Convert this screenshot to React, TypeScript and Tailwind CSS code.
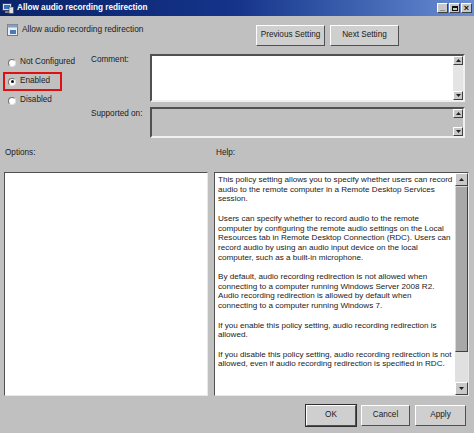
import React from 'react';

const font = "font-['Liberation_Sans','Segoe_UI',sans-serif]";

const RaisedButton: React.FC<{ label: string; w: string; isDefault?: boolean }> = ({ label, w, isDefault }) => (
    <div className={`${w} h-[21px] ${isDefault ? 'outline outline-1 outline-[#303030]' : ''} border border-t-white border-l-white border-b-[#505050] border-r-[#505050] bg-[#cfcfcf] flex items-center justify-center text-[8.2px] text-[#202020]`}>
        {label}
    </div>
);

const ScrollArrow: React.FC<{ up?: boolean; w: string; h: string }> = ({ up, w, h }) => (
    <div className={`${w} ${h} bg-[#c8c8c8] border border-t-white border-l-white border-b-[#404040] border-r-[#404040] flex items-center justify-center`}>
        <svg width="5" height="3" viewBox="0 0 5 3">
            {up ? <path d="M2.5 0 L5 3 L0 3 Z" fill="#202020" /> : <path d="M0 0 L5 0 L2.5 3 Z" fill="#202020" />}
        </svg>
    </div>
);

const Radio: React.FC<{ checked?: boolean }> = ({ checked }) => (
    <div className="w-[8px] h-[8px] rounded-full bg-white border border-t-[#707070] border-l-[#707070] border-b-[#e0e0e0] border-r-[#e0e0e0] flex items-center justify-center">
        {checked && <div className="w-[3px] h-[3px] rounded-full bg-[#101010]" />}
    </div>
);

const App: React.FC = () => {
    return (
        <div className={`w-[474px] h-[433px] bg-[#c0c0c0] overflow-hidden flex flex-col ${font} text-[#202020]`}>
            {/* Title bar */}
            <div className="h-[16px] flex items-center bg-gradient-to-r from-[#0a246a] via-[#15348a] to-[#6a8ed4] pl-[2px] pr-[2px]">
                <svg width="12" height="11" viewBox="0 0 12 11" className="mr-[3px]">
                    <rect x="0.5" y="0.5" width="9" height="7" fill="#cfe0f0" stroke="#304060" />
                    <rect x="2" y="2" width="6" height="4" fill="#3a6cc8" />
                    <rect x="3" y="8" width="4" height="2" fill="#808080" />
                    <rect x="7" y="4" width="4.5" height="6.5" fill="#e0e0e0" stroke="#404040" strokeWidth="0.6" />
                </svg>
                <span className="text-white font-bold text-[8.2px] leading-none">Allow audio recording redirection</span>
                <div className="ml-auto flex gap-[1px]">
                    <div className="w-[11px] h-[10px] bg-[#c8c8c8] border border-t-white border-l-white border-b-[#404040] border-r-[#404040] flex items-end justify-center pb-[1px]">
                        <div className="w-[5px] h-[1px] bg-[#909090]" />
                    </div>
                    <div className="w-[11px] h-[10px] bg-[#c8c8c8] border border-t-white border-l-white border-b-[#404040] border-r-[#404040] flex items-center justify-center">
                        <div className="w-[6px] h-[5px] border border-t-2 border-[#101010]" />
                    </div>
                    <div className="w-[11px] h-[10px] bg-[#c8c8c8] border border-t-white border-l-white border-b-[#404040] border-r-[#404040] flex items-center justify-center text-[9px] font-bold leading-none text-[#101010]">
                        ×
                    </div>
                </div>
            </div>

            {/* Header row */}
            <div className="h-[34px] flex px-[4px]">
                <div className="w-[252px] flex items-start pt-[8px] pl-[3px] gap-[4px]">
                    <svg width="11" height="12" viewBox="0 0 11 12">
                        <rect x="0.5" y="0.5" width="10" height="11" fill="#e8eef4" stroke="#6a7a8a" />
                        <rect x="0.5" y="0.5" width="10" height="3" fill="#8aa0b8" />
                        <rect x="3" y="6" width="6" height="4" fill="#4a78b8" />
                    </svg>
                    <span className="text-[8.4px] leading-[11px]">Allow audio recording redirection</span>
                </div>
                <div className="flex gap-[5px] pt-[9px]">
                    <RaisedButton label="Previous Setting" w="w-[69px]" />
                    <RaisedButton label="Next Setting" w="w-[69px]" />
                </div>
            </div>

            {/* Settings row */}
            <div className="h-[95px] flex pl-[3px]">
                <div className="w-[88px] flex flex-col pt-[3px] text-[8.2px]">
                    <div className="h-[19px] flex items-center gap-[4px] pl-[5px]">
                        <Radio />
                        <span>Not Configured</span>
                    </div>
                    <div className="h-[19px] w-[59px] flex items-center gap-[4px] pl-[3px] border-2 border-[#e01010]">
                        <Radio checked />
                        <span>Enabled</span>
                    </div>
                    <div className="h-[19px] flex items-center gap-[4px] pl-[5px]">
                        <Radio />
                        <span>Disabled</span>
                    </div>
                </div>
                <div className="flex flex-col pt-[4px] gap-[5px]">
                    <div className="flex">
                        <div className="w-[59px] text-[8.2px]">Comment:</div>
                        <div className="w-[315px] h-[48px] bg-white border-2 border-t-[#505050] border-l-[#505050] border-b-[#f0f0f0] border-r-[#f0f0f0] flex justify-end">
                            <div className="w-[10px] flex flex-col justify-between bg-[#e4e4e4]">
                                <ScrollArrow up w="w-[10px]" h="h-[9px]" />
                                <ScrollArrow w="w-[10px]" h="h-[9px]" />
                            </div>
                        </div>
                    </div>
                    <div className="flex">
                        <div className="w-[59px] text-[8.2px] pt-[1px]">Supported on:</div>
                        <div className="w-[315px] h-[31px] bg-[#c0c0c0] border-2 border-t-[#505050] border-l-[#505050] border-b-[#f0f0f0] border-r-[#f0f0f0] flex justify-end">
                            <div className="w-[10px] flex flex-col justify-between">
                                <ScrollArrow up w="w-[10px]" h="h-[9px]" />
                                <ScrollArrow w="w-[10px]" h="h-[9px]" />
                            </div>
                        </div>
                    </div>
                </div>
            </div>

            {/* Options / Help labels */}
            <div className="h-[27px] flex items-start pt-[2px] text-[8.2px] pl-[5px]">
                <div className="w-[211px]">Options:</div>
                <div>Help:</div>
            </div>

            {/* Options / Help panes */}
            <div className="h-[224px] flex px-[4px] gap-[6px]">
                <div className="w-[204px] bg-white border border-t-[#505050] border-l-[#505050] border-b-[#e8e8e8] border-r-[#e8e8e8]" />
                <div className="w-[255px] bg-white border border-t-[#505050] border-l-[#505050] border-b-[#e8e8e8] border-r-[#e8e8e8] flex">
                    <div className="flex-1 pl-[3px] pt-[2px] text-[8.1px] leading-[9.7px] text-[#1a1a1a] flex flex-col gap-[9.7px]">
                        <p>This policy setting allows you to specify whether users can record audio to the remote computer in a Remote Desktop Services session.</p>
                        <p>Users can specify whether to record audio to the remote computer by configuring the remote audio settings on the Local Resources tab in Remote Desktop Connection (RDC). Users can record audio by using an audio input device on the local computer, such as a built-in microphone.</p>
                        <p className="pr-[8px]">By default, audio recording redirection is not allowed when connecting to a computer running Windows Server 2008 R2. Audio recording redirection is allowed by default when connecting to a computer running Windows 7.</p>
                        <p>If you enable this policy setting, audio recording redirection is allowed.</p>
                        <p>If you disable this policy setting, audio recording redirection is not allowed, even if audio recording redirection is specified in RDC.</p>
                    </div>
                    <div className="w-[13px] flex flex-col bg-[#e0e0e0]">
                        <ScrollArrow up w="w-[13px]" h="h-[13px]" />
                        <div className="h-[166px] bg-[#a8a8a8] border border-t-[#d8d8d8] border-l-[#d8d8d8] border-b-[#404040] border-r-[#404040]" />
                        <div className="flex-1" />
                        <ScrollArrow w="w-[13px]" h="h-[13px]" />
                    </div>
                </div>
            </div>

            {/* Bottom buttons */}
            <div className="flex justify-end gap-[5px] pr-[8px] pt-[9px]">
                <RaisedButton label="OK" w="w-[50px]" isDefault />
                <RaisedButton label="Cancel" w="w-[49px]" />
                <RaisedButton label="Apply" w="w-[51px]" />
            </div>
        </div>
    );
};

export default App;
